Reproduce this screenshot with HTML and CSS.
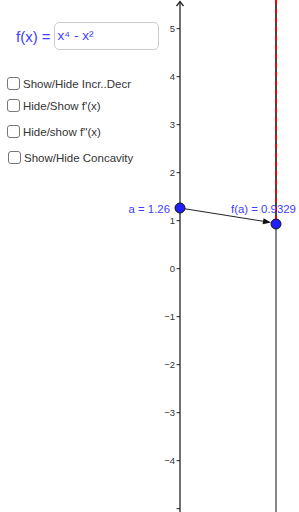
FILE: index.html
```html
<!DOCTYPE html>
<html lang="en">
<head>
  <meta charset="UTF-8">
  <meta name="viewport" content="width=device-width, initial-scale=1">
  <title>Derivative explorer</title>
  <link rel="stylesheet" href="styles.css">
</head>
<body>

  <div class="app">
    <svg class="graph" width="299" height="512" viewBox="0 0 299 512">
      <!-- y axis -->
      <line x1="180" y1="1.5" x2="180" y2="512" class="axis"/>
      <polyline points="176.5,6 180,1.5 183.5,6" class="axis" fill="none"/>

      <g class="ticks">
        <line x1="176.5" y1="28.7" x2="180" y2="28.7"/>
        <line x1="176.5" y1="76.7" x2="180" y2="76.7"/>
        <line x1="176.5" y1="124.7" x2="180" y2="124.7"/>
        <line x1="176.5" y1="172.7" x2="180" y2="172.7"/>
        <line x1="176.5" y1="220.7" x2="180" y2="220.7"/>
        <line x1="176.5" y1="268.7" x2="180" y2="268.7"/>
        <line x1="176.5" y1="316.7" x2="180" y2="316.7"/>
        <line x1="176.5" y1="364.7" x2="180" y2="364.7"/>
        <line x1="176.5" y1="412.7" x2="180" y2="412.7"/>
        <line x1="176.5" y1="460.7" x2="180" y2="460.7"/>
        <line x1="176.5" y1="508.7" x2="180" y2="508.7"/>
      </g>

      <g class="tick-labels">
        <text x="175" y="32">5</text>
        <text x="175" y="80">4</text>
        <text x="175" y="128">3</text>
        <text x="175" y="176">2</text>
        <text x="175" y="224">1</text>
        <text x="175" y="272">0</text>
        <text x="175" y="320">−1</text>
        <text x="175" y="368">−2</text>
        <text x="175" y="416">−3</text>
        <text x="175" y="464">−4</text>
      </g>

      <!-- x = a line -->
      <line x1="276" y1="0" x2="276" y2="224" class="dash-base"/>
      <line x1="276" y1="0" x2="276" y2="224" class="dash-red"/>
      <line x1="276" y1="224" x2="276" y2="512" class="vline"/>

      <!-- vector a -> f(a) -->
      <line x1="180" y1="208" x2="264" y2="221.4" class="vec"/>
      <polygon points="271,222.6 262.6,224.3 263.6,218.3" class="vec-head"/>

      <circle cx="180" cy="208" r="5" class="pt"/>
      <circle cx="276" cy="224" r="5" class="pt"/>

      <text x="170" y="212.5" class="pt-label" text-anchor="end">a = 1.26</text>
      <text x="231" y="212.5" class="pt-label">f(a) = 0.9329</text>
    </svg>

    <div class="panel">
      <div class="fn">
        <span class="fn-label">f(x) =</span>
        <div class="fn-input">x⁴ - x²</div>
      </div>

      <div class="check"><span class="box"></span>Show/Hide Incr..Decr</div>
      <div class="check"><span class="box"></span>Hide/Show f'(x)</div>
      <div class="check spaced"><span class="box"></span>Hide/show f''(x)</div>
      <div class="check spaced indent"><span class="box"></span>Show/Hide Concavity</div>
    </div>
  </div>

</body>
</html>
```

FILE: styles.css
```css
body {
  margin: 0;
  padding: 0;
  font-family: "Liberation Sans", Arial, sans-serif;
  background: #fff;
  color: #333;
  overflow: hidden;
}

.app {
  display: grid;
  width: 299px;
  height: 512px;
}

.graph,
.panel {
  grid-area: 1 / 1;
}

.graph {
  display: block;
  font-family: "Liberation Sans", Arial, sans-serif;
}

.axis {
  stroke: #252525;
  stroke-width: 1.3;
}

.ticks line {
  stroke: #252525;
  stroke-width: 1;
}

.tick-labels text {
  font-size: 9.5px;
  fill: #333;
  text-anchor: end;
}

.dash-base {
  stroke: #444;
  stroke-width: 2;
}

.dash-red {
  stroke: #f00;
  stroke-width: 2;
  stroke-dasharray: 4.5 4.5;
}

.vline {
  stroke: #888;
  stroke-width: 2;
}

.vec {
  stroke: #222;
  stroke-width: 1;
}

.vec-head {
  fill: #111;
}

.pt {
  fill: #1f1fff;
  stroke: #111;
  stroke-width: 1;
}

.pt-label {
  font-size: 11.4px;
  fill: #4040ff;
}

.panel {
  padding: 22px 0 0 7px;
  align-self: start;
  justify-self: start;
}

.fn {
  display: flex;
  align-items: center;
  height: 28px;
  margin-left: 9px;
}

.fn-label {
  color: #4040ff;
  font-size: 15px;
  margin-right: 3px;
}

.fn-input {
  box-sizing: border-box;
  width: 105px;
  height: 28px;
  border: 1px solid #ccc;
  border-radius: 5px;
  padding: 3px 0 0 3px;
  color: #4040ff;
  font-size: 13.5px;
  line-height: 20px;
}

.check {
  display: flex;
  align-items: center;
  height: 13px;
  margin-top: 9px;
  font-size: 11.5px;
  color: #333;
}

.fn + .check {
  margin-top: 27px;
}

.check.spaced {
  margin-top: 13px;
}

.check.indent {
  padding-left: 1px;
}

.box {
  box-sizing: border-box;
  width: 13px;
  height: 13px;
  border: 1px solid #777;
  border-radius: 3px;
  margin-right: 3px;
  background: #fff;
}
```
